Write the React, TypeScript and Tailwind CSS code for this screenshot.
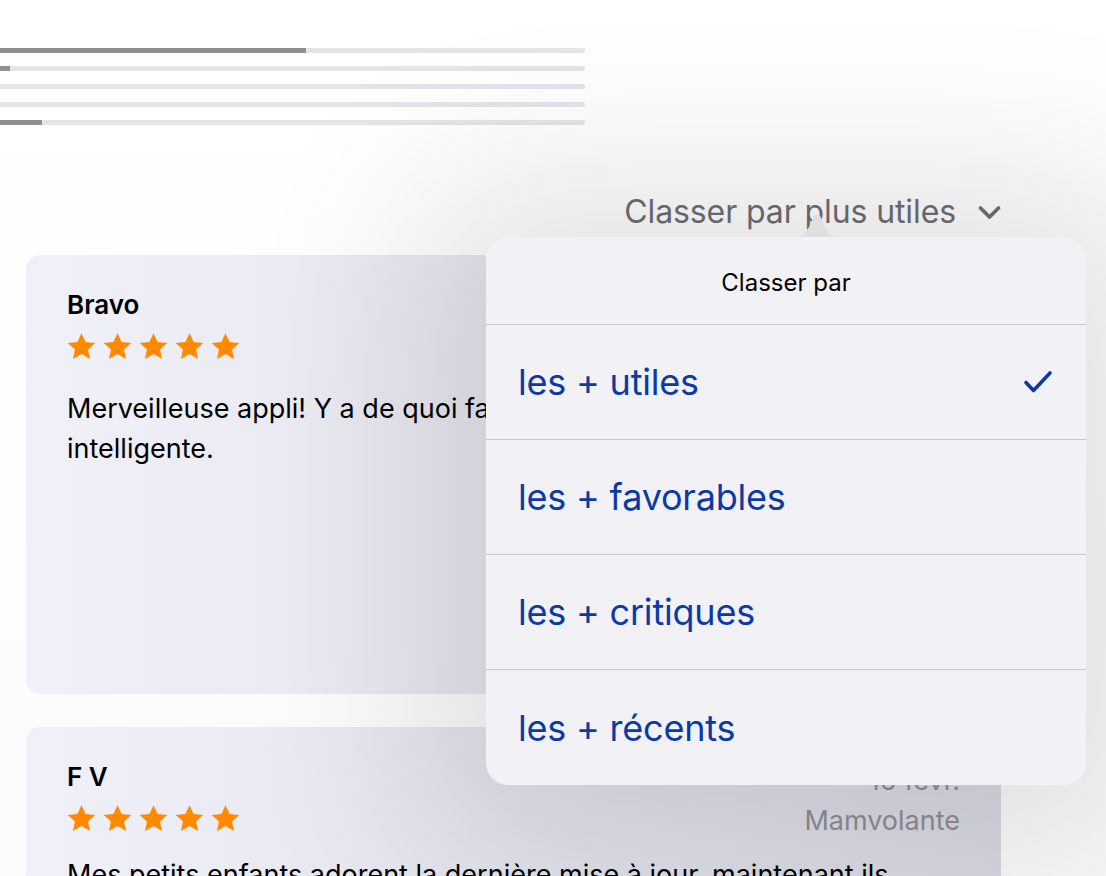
import React from 'react';

const bars = [306, 10, 0, 0, 42];

const Stars = () => (
  <div className="flex gap-[7px]">
    {[0, 1, 2, 3, 4].map((i) => (
      <svg key={i} width="29" height="27" viewBox="0 0 24 22.5">
        <path
          d="M12 0.3l3.4 7.2 8.1 0.8-6.1 5.4 1.8 8L12 17.6l-7.2 4.1 1.8-8L0.5 8.3l8.1-0.8z"
          fill="#ff8a00"
        />
      </svg>
    ))}
  </div>
);

const options = ['les + utiles', 'les + favorables', 'les + critiques', 'les + récents'];

export default function App() {
  return (
    <div className="relative h-[876px] w-[1106px] overflow-hidden bg-gradient-to-b from-white to-[#fbfbfb] font-['Inter','Liberation_Sans',sans-serif]">
      {/* rating histogram */}
      <div className="flex flex-col gap-[13px] pt-[48px]">
        {bars.map((w, i) => (
          <div key={i} className="h-[5px] w-[585px] overflow-hidden rounded-r-full bg-[#e4e4e9]">
            <div className="h-full bg-[#8e8e93]" style={{ width: w }} />
          </div>
        ))}
      </div>

      {/* sort trigger */}
      <div className="mt-[67px] flex items-center justify-end gap-[22px] pr-[105px]">
        <span className="text-[32px] leading-[40px] tracking-[-0.1px] text-[#6e6e73]">Classer par plus utiles</span>
        <svg width="23" height="15" viewBox="0 0 23 15">
          <path d="M2.5 3l9 9 9-9" fill="none" stroke="#6e6e73" strokeWidth="3.6" strokeLinecap="round" strokeLinejoin="round" />
        </svg>
      </div>

      {/* reviews */}
      <div className="mt-[23px] flex flex-col gap-[33px] pl-[26px]">
        <div className="h-[439px] w-[975px] rounded-[14px] bg-gradient-to-r from-[#f0f0f8] to-[#dcdce6] px-[41px] pt-[34px]">
          <div className="text-[26px] font-semibold leading-[32px] text-black">Bravo</div>
          <div className="mt-[12px]">
            <Stars />
          </div>
          <p className="mt-[29px] text-[27px] leading-[40px] text-black">
            Merveilleuse appli! Y a de quoi faire pour petits et grands, ludique et
            <br />
            intelligente.
          </p>
        </div>

        <div className="h-[300px] w-[975px] rounded-[14px] bg-gradient-to-r from-[#f0f0f8] to-[#d9d9e3] px-[41px] pt-[34px]">
          <div className="flex items-start justify-between">
            <div>
              <div className="text-[26px] font-semibold leading-[32px] text-black">F V</div>
              <div className="mt-[12px]">
                <Stars />
              </div>
            </div>
            <div className="flex flex-col items-end text-[27px] leading-[40px] text-[#8e8e93]">
              <span>16 févr.</span>
              <span>Mamvolante</span>
            </div>
          </div>
          <p className="mt-[14px] text-[27px] leading-[40px] text-black">
            Mes petits enfants adorent la dernière mise à jour, maintenant ils
          </p>
        </div>
      </div>

      {/* popover arrow */}
      <svg className="absolute left-[790px] top-[211px]" width="54" height="27" viewBox="0 0 54 27">
        <path d="M0 27 C10 27 14 25 19 16 L23 7 C25 2 29 2 31 7 L35 16 C40 25 44 27 54 27 Z" fill="#f2f2f6" />
      </svg>

      {/* popover */}
      <div className="absolute left-[486px] top-[237px] w-[600px] rounded-[22px] bg-[#f2f2f6] shadow-[0_10px_180px_70px_rgba(0,0,0,0.11)]">
        <div className="flex h-[88px] items-center justify-center border-b border-[#c8c8d0] pt-[4px] text-[24px] text-black">
          Classer par
        </div>
        {options.map((o, i) => (
          <div
            key={o}
            className={`flex h-[115px] items-center justify-between pl-[32px] pr-[33px] ${i < options.length - 1 ? 'border-b border-[#c8c8d0]' : ''}`}
          >
            <span className="text-[36px] tracking-[-0.2px] text-[#0b3aa8]">{o}</span>
            {i === 0 && (
              <svg width="30" height="24" viewBox="0 0 30 24">
                <path d="M3 12.5l7.5 8L27 3" fill="none" stroke="#0b3aa8" strokeWidth="3.6" strokeLinecap="round" strokeLinejoin="round" />
              </svg>
            )}
          </div>
        ))}
      </div>
    </div>
  );
}
